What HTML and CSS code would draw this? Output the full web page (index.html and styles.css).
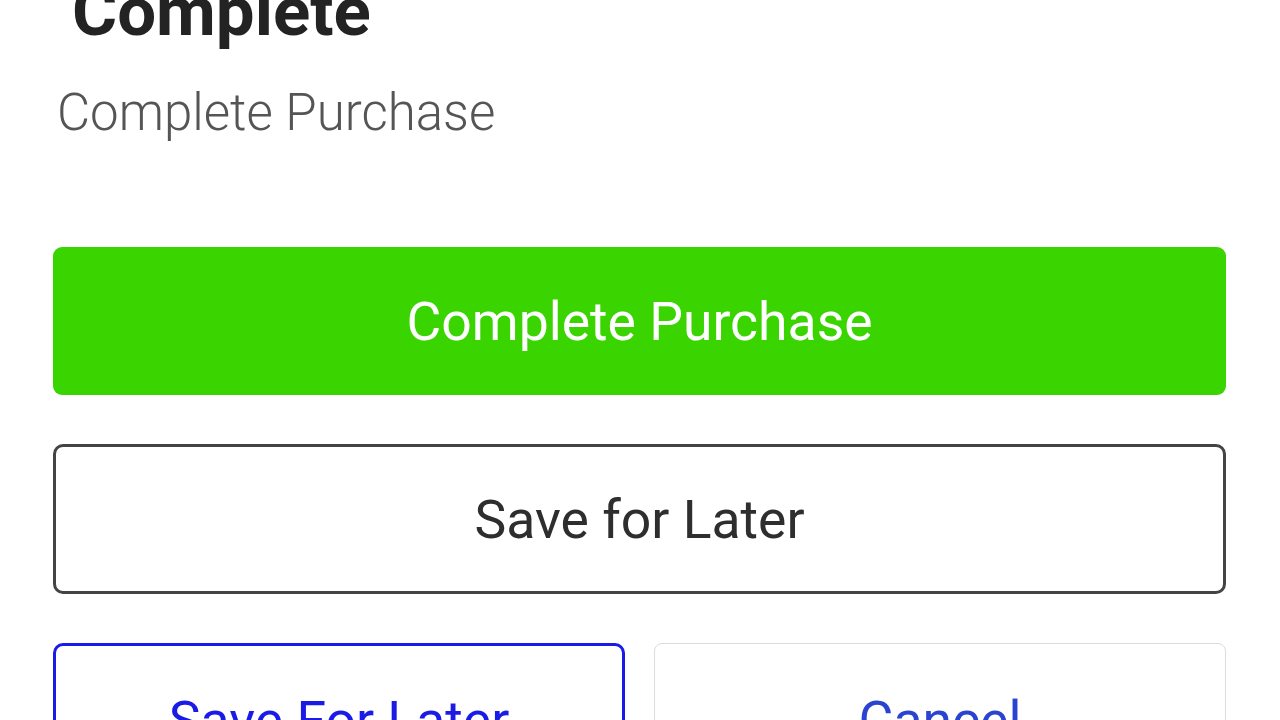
FILE: index.html
```html
<!DOCTYPE html>
<html lang="en">
<head>
<meta charset="utf-8">
<title>Complete Purchase</title>
<link rel="stylesheet" href="styles.css">
</head>
<body>
<main class="screen">
  <header class="head">
    <h1 class="title">Complete</h1>
    <p class="subtitle">Complete Purchase</p>
  </header>
  <div class="actions">
    <button class="btn btn-primary" type="button">Complete Purchase</button>
    <button class="btn btn-outline" type="button">Save for Later</button>
    <div class="row">
      <button class="btn btn-focus" type="button">Save For Later</button>
      <button class="btn btn-light" type="button">Cancel</button>
    </div>
  </div>
</main>
</body>
</html>
```

FILE: styles.css
```css
* { box-sizing: border-box; }
html, body { margin: 0; padding: 0; background: #ffffff; }
body {
  font-family: Roboto, "Noto Sans", "Liberation Sans", sans-serif;
  width: 1280px;
  height: 720px;
  overflow: hidden;
}
.screen {
  padding: 0 54px 0 53px;
  display: flex;
  flex-direction: column;
}
.head {
  display: flex;
  flex-direction: column;
}
.title {
  margin: -28px 0 0 19px;
  font-size: 69px;
  line-height: 80px;
  font-weight: 700;
  color: #232323;
}
.subtitle {
  margin: 31px 0 0 4px;
  font-size: 51px;
  line-height: 60px;
  font-weight: 300;
  color: #555555;
}
.actions {
  margin-top: 104px;
  display: flex;
  flex-direction: column;
  gap: 49px;
}
.btn {
  font-family: inherit;
  width: 100%;
  height: 148px;
  font-size: 53.5px;
  font-weight: 400;
  border-radius: 9px;
  cursor: pointer;
  display: flex;
  align-items: center;
  justify-content: center;
  padding: 0;
}
.btn-primary {
  background: #3ad400;
  color: #ffffff;
  border: none;
}
.btn-outline {
  height: 150px;
  background: #ffffff;
  color: #2e2e2e;
  border: 3px solid #444444;
  border-radius: 10px;
}
.row {
  display: grid;
  grid-template-columns: 1fr 1fr;
  gap: 29px;
}
.btn-focus {
  background: #ffffff;
  color: #1b1be6;
  border: 3px solid #1a1ae8;
  border-radius: 10px;
  padding-top: 6px;
}
.btn-light {
  background: #ffffff;
  color: #2a44d0;
  border: 1px solid #dcdcdc;
  border-radius: 8px;
  padding-top: 6px;
}
```
